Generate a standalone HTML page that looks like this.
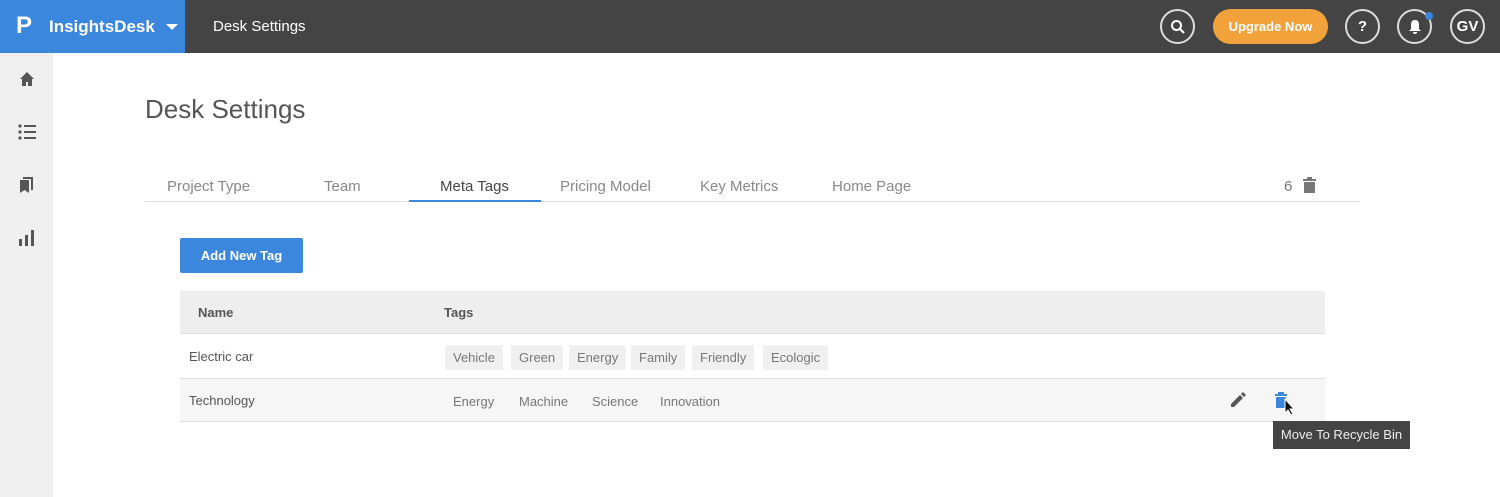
<!DOCTYPE html>
<html><head><meta charset="utf-8"><style>
*{box-sizing:border-box;margin:0;padding:0}
body{width:1500px;height:497px;overflow:hidden;background:#fff;font-family:"Liberation Sans",sans-serif;position:relative;color:#555}
.abs{position:absolute}
.hdr{left:0;top:0;width:1500px;height:53px;background:#444}
.logo{left:0;top:0;width:185px;height:53px;background:#3c87de;color:#fff}
.side{left:0;top:53px;width:53px;height:444px;background:#efefef}
.circ{top:9px;width:35px;height:35px;border:2px solid #ddd;border-radius:50%;color:#fff;font-weight:bold;font-size:15px;display:flex;align-items:center;justify-content:center}
.tab{top:178px;font-size:15px;color:#888}
.tag{top:345px;height:25px;background:#f0f0f0;font-size:13px;color:#777;line-height:25px;padding:0 8px}
.t2{top:394px;font-size:13px;color:#777}
</style></head><body>
<div class="abs hdr"></div>
<div class="abs logo">
<div class="abs" style="left:16px;top:12px;font-size:24px;font-weight:bold">P</div>
<div class="abs" style="left:49px;top:17px;font-size:17px;font-weight:bold">InsightsDesk</div>
<div class="abs" style="left:166px;top:24px;border-left:6px solid transparent;border-right:6px solid transparent;border-top:6px solid #fff"></div>
</div>
<div class="abs" style="left:213px;top:18px;color:#fff;font-size:15px">Desk Settings</div>
<div class="abs circ" style="left:1160px"><svg width="16" height="16" viewBox="0 0 16 16"><circle cx="6.5" cy="6.5" r="4.5" stroke="#fff" stroke-width="2" fill="none"/><path d="M10 10l4 4" stroke="#fff" stroke-width="2.2"/></svg></div>
<div class="abs" style="left:1213px;top:9px;width:115px;height:35px;border-radius:18px;background:#f2a23a;color:#fff;font-weight:bold;font-size:13px;text-align:center;line-height:35px">Upgrade Now</div>
<div class="abs circ" style="left:1345px">?</div>
<div class="abs circ" style="left:1397px"><svg width="14" height="16" viewBox="0 0 14 16"><path d="M7 1c-3 0-4 2-4 5v4l-2 2h12l-2-2V6c0-3-1-5-4-5zM5 13h4a2 2 0 0 1-4 0z" fill="#fff"/></svg></div>
<div class="abs" style="left:1425px;top:12px;width:8px;height:8px;border-radius:50%;background:#3c87de"></div>
<div class="abs circ" style="left:1450px">GV</div>
<div class="abs side"></div>
<svg class="abs" style="left:19px;top:71px" width="16" height="16" viewBox="0 0 16 16"><path d="M8 1L1 8h2v7h4v-4h2v4h4V8h2z" fill="#555"/></svg>
<svg class="abs" style="left:18px;top:124px" width="18" height="16" viewBox="0 0 18 16"><g fill="#555"><circle cx="2" cy="2" r="1.6"/><circle cx="2" cy="8" r="1.6"/><circle cx="2" cy="14" r="1.6"/><rect x="6" y="1" width="12" height="2"/><rect x="6" y="7" width="12" height="2"/><rect x="6" y="13" width="12" height="2"/></g></svg>
<svg class="abs" style="left:19px;top:176px" width="16" height="17" viewBox="0 0 16 17"><path d="M1 4h9v13l-4.5-3L1 17z M4 1h10v13h-2V3H4z" fill="#555"/></svg>
<svg class="abs" style="left:19px;top:229px" width="16" height="17" viewBox="0 0 16 17"><g fill="#555"><rect x="0" y="10" width="3" height="7"/><rect x="6" y="6" width="3" height="11"/><rect x="12" y="1" width="3" height="16"/></g></svg>
<div class="abs" style="left:145px;top:94px;font-size:26px;color:#555">Desk Settings</div>
<div class="abs tab" style="left:167px">Project Type</div>
<div class="abs tab" style="left:324px">Team</div>
<div class="abs tab" style="left:440px;color:#444">Meta Tags</div>
<div class="abs tab" style="left:560px">Pricing Model</div>
<div class="abs tab" style="left:700px">Key Metrics</div>
<div class="abs tab" style="left:832px">Home Page</div>
<div class="abs tab" style="left:1284px;color:#777">6</div>
<svg class="abs" style="left:1303px;top:177px" width="13" height="16" viewBox="0 0 13 16"><path d="M0 2h13v2H0zM4 0h5v2H4zM1 5h11v11H1z" fill="#777"/></svg>
<div class="abs" style="left:145px;top:201px;width:1215px;height:1px;background:#ddd"></div>
<div class="abs" style="left:409px;top:200px;width:132px;height:2px;background:#3c87de"></div>
<div class="abs" style="left:180px;top:238px;width:123px;height:35px;background:#3c87de;border-radius:2px;color:#fff;font-weight:bold;font-size:13px;text-align:center;line-height:35px">Add New Tag</div>
<div class="abs" style="left:180px;top:291px;width:1145px;height:43px;background:#eee;border-bottom:1px solid #ddd"></div>
<div class="abs" style="left:198px;top:305px;font-size:13px;font-weight:bold;color:#555">Name</div>
<div class="abs" style="left:444px;top:305px;font-size:13px;font-weight:bold;color:#555">Tags</div>
<div class="abs" style="left:180px;top:378px;width:1145px;height:44px;background:#f6f6f6;border-top:1px solid #ddd;border-bottom:1px solid #ddd"></div>
<div class="abs" style="left:189px;top:349px;font-size:13px;color:#555">Electric car</div>
<div class="abs tag" style="left:445px">Vehicle</div>
<div class="abs tag" style="left:511px">Green</div>
<div class="abs tag" style="left:569px">Energy</div>
<div class="abs tag" style="left:631px">Family</div>
<div class="abs tag" style="left:692px">Friendly</div>
<div class="abs tag" style="left:763px">Ecologic</div>
<div class="abs" style="left:189px;top:393px;font-size:13px;color:#555">Technology</div>
<div class="abs t2" style="left:453px">Energy</div>
<div class="abs t2" style="left:519px">Machine</div>
<div class="abs t2" style="left:592px">Science</div>
<div class="abs t2" style="left:660px">Innovation</div>
<svg class="abs" style="left:1229px;top:391px" width="18" height="18" viewBox="0 0 18 18"><path d="M2 13l9-9 3 3-9 9H2z M12 3l2-2 3 3-2 2z" fill="#555"/></svg>
<svg class="abs" style="left:1274px;top:392px" width="14" height="16" viewBox="0 0 14 16"><path d="M1 2h12v2H1zM4 0h6v2H4zM2 5h10v11H2z" fill="#3c87de"/></svg>
<svg class="abs" style="left:1284px;top:398px" width="12" height="18" viewBox="0 0 12 18"><path d="M1 1v14l3-3 3 5 2-1-3-5h4z" fill="#111" stroke="#fff" stroke-width="1"/></svg>
<div class="abs" style="left:1273px;top:421px;width:137px;height:28px;background:#444;color:#eee;font-size:13px;text-align:center;line-height:28px">Move To Recycle Bin</div>
</body></html>
